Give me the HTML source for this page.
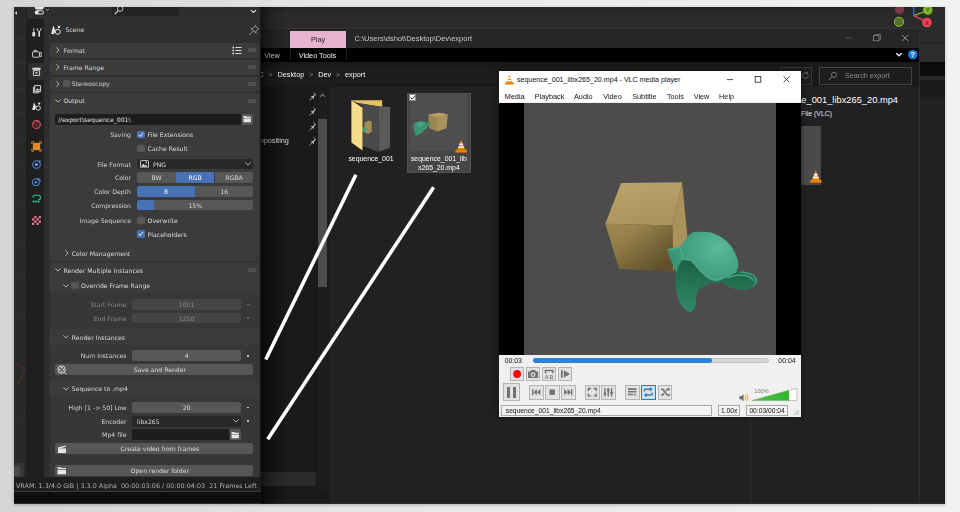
<!DOCTYPE html>
<html><head><meta charset="utf-8"><title>Render Multiple Instances</title>
<style>
html,body{margin:0;padding:0}
body{width:960px;height:512px;overflow:hidden;position:relative;background:linear-gradient(90deg,#d3d6d3 0,#e2e4e2 30%,#eceeec 70%,#f1f3f1 100%);font-family:"DejaVu Sans","Liberation Sans",sans-serif}
#shot{position:absolute;left:14px;top:7px;width:930.8px;height:496.6px;overflow:hidden;background:#2b2b2b;box-shadow:0 1px 3px rgba(0,0,0,.25)}
#in{position:absolute;left:-14px;top:-7px;width:960px;height:512px;filter:blur(0.35px)}
.a{position:absolute;box-sizing:border-box}
.t{position:absolute;white-space:pre;line-height:1}
/* blender */
.bt{font-family:"DejaVu Sans","Liberation Sans",sans-serif;font-size:6.15px;color:#dcdcdc;line-height:8px;height:8px}
.lbl{text-align:right;color:#d2d2d2}
.pan{background:#3b3b3b;border-radius:2.2px}
.w{background:#575757;border-radius:2px}
.cb{width:7.6px;height:7.6px;border-radius:1.4px;background:#585858}
.cb.on{background:#4772b3}
.ctr{text-align:center}
/* windows */
.wt{font-family:"Liberation Sans",sans-serif;color:#fff}
</style></head><body>
<div id="shot"><div id="in">
<!-- background: blender viewport + right strip -->
<div class="a" style="left:14px;top:7px;width:931px;height:22px;background:linear-gradient(#242524 0,#292a29 5px,#2a2b2a 100%)"></div>
<div class="a" style="left:919px;top:7px;width:26px;height:36px;background:#2b2b2b"></div>
<div class="a" style="left:919px;top:43px;width:26px;height:19px;background:#2d2d2d;border-top:1px solid #232323"></div>
<div class="a" style="left:919px;top:62px;width:26px;height:14px;background:#0b0b0b"></div>
<div class="a" style="left:919px;top:76px;width:26px;height:4px;background:#2a2a2a"></div>
<div class="a" style="left:919px;top:80px;width:26px;height:17px;background:#1b1b1b"></div>
<div class="a" style="left:919px;top:97px;width:26px;height:406px;background:#212022"></div>
<svg class="a" style="left:880px;top:7px" width="65" height="30" viewBox="880 7 65 30">
 <circle cx="899.4" cy="9.6" r="4.6" fill="#7a3b46"/>
 <line x1="913.8" y1="15.6" x2="913.8" y2="7" stroke="#3f7fe0" stroke-width="1"/>
 <line x1="913.8" y1="15.6" x2="927.5" y2="10.5" stroke="#7fb52a" stroke-width="1.2"/>
 <line x1="913.8" y1="15.6" x2="926.5" y2="22" stroke="#ee4057" stroke-width="1.2"/>
 <circle cx="899" cy="21.8" r="4.6" fill="#55702a" stroke="#8fc22c" stroke-width="1"/>
 <circle cx="927.8" cy="10" r="4.8" fill="#7fb52a"/>
 <circle cx="926.9" cy="22.5" r="4.8" fill="#ee4057"/>
 <text x="927.8" y="12" font-family="DejaVu Sans" font-size="5.5" text-anchor="middle" fill="#222">Y</text>
 <text x="926.9" y="24.5" font-family="DejaVu Sans" font-size="5.5" text-anchor="middle" fill="#222">X</text>
</svg>
<!--BG-->
<!--EXP_S--><!-- explorer window -->
<div class="a" style="left:240px;top:28px;width:680px;height:20px;background:#262626;border-top:1px solid #323232"></div>
<div class="a" style="left:240px;top:48px;width:680px;height:14px;background:#000"></div>
<div class="a" style="left:240px;top:62px;width:680px;height:24px;background:#191919"></div>
<div class="a" style="left:240px;top:86px;width:89px;height:417px;background:linear-gradient(90deg,#141415 0,#141415 24%,#1a1a1b 60%)"></div>
<div class="a" style="left:329px;top:86px;width:421px;height:417px;background:#212023"></div>
<div class="a" style="left:750px;top:86px;width:170px;height:417px;background:#212023;border-left:1px solid #2e2e30"></div>
<div class="a" style="left:919px;top:28px;width:1px;height:475px;background:#2f2f31"></div>
<!-- title bar -->
<div class="a" style="left:290px;top:30.8px;width:56.2px;height:17.2px;background:#e6b4d1"></div>
<div class="t wt" style="left:290px;top:36px;width:56.2px;text-align:center;font-size:7.3px;color:#231a21">Play</div>
<div class="t wt" style="left:354.5px;top:34.6px;font-size:7.5px;color:#c9c9c9">C:\Users\dshot\Desktop\Dev\export</div>
<svg class="a" style="left:840px;top:30px" width="75" height="16" viewBox="840 30 75 16" fill="none" stroke="#8a8a8a" stroke-width="0.8">
 <line x1="846" y1="38" x2="852" y2="38" stroke="#666"/>
 <rect x="873.4" y="35.6" width="5.6" height="5.2" stroke="#8a8a8a"/><path d="M875 35.6v-1.2h5.6v5.2h-1.6" stroke="#777"/>
 <path d="M902 34.8l6.4 6.4M908.4 34.8l-6.4 6.4" stroke="#b5b5b5"/>
</svg>
<!-- ribbon tabs -->
<div class="t wt" style="left:264.2px;top:52px;font-size:7.3px;color:#d8d8d8">View</div>
<div class="t wt" style="left:298.7px;top:52px;font-size:7.3px;color:#f0f0f0">Video Tools</div>
<div class="a" style="left:289.6px;top:48px;width:1px;height:12px;background:#1f1f1f"></div>
<div class="a" style="left:346px;top:48px;width:1px;height:12px;background:#1f1f1f"></div>
<svg class="a" style="left:892px;top:48px" width="28" height="14" viewBox="892 48 28 14">
 <path d="M896.2 53.2l2.8 2.6 2.8-2.6" fill="none" stroke="#f0f0f0" stroke-width="1.3"/>
 <circle cx="912.8" cy="54.6" r="4.7" fill="#1b7fe2"/>
 <text x="912.8" y="57.3" font-family="Liberation Sans" font-weight="bold" font-size="7.5" text-anchor="middle" fill="#fff">?</text>
</svg>
<!-- address bar -->
<div class="a" style="left:240px;top:66.5px;width:550px;height:18px;background:#1d1d1e"></div>
<div class="t wt" style="left:258.6px;top:71.3px;font-size:7.3px;color:#e8e8e8">C</div>
<div class="t wt" style="left:268.6px;top:71.6px;font-size:6.5px;color:#9a9a9a">&gt;</div>
<div class="t wt" style="left:277.5px;top:71.3px;font-size:7.3px;color:#f2f2f2">Desktop</div>
<div class="t wt" style="left:309.2px;top:71.6px;font-size:6.5px;color:#9a9a9a">&gt;</div>
<div class="t wt" style="left:318.3px;top:71.3px;font-size:7.3px;color:#f2f2f2">Dev</div>
<div class="t wt" style="left:336px;top:71.6px;font-size:6.5px;color:#9a9a9a">&gt;</div>
<div class="t wt" style="left:345px;top:71.3px;font-size:7.3px;color:#f2f2f2">export</div>
<div class="a" style="left:780px;top:66.5px;width:32px;height:18px;border:1px solid #3a3a3a;background:#1d1d1e"></div>
<svg class="a" style="left:800px;top:70px" width="11" height="11" viewBox="0 0 11 11"><path d="M8.3 5.5a2.9 2.9 0 1 1-1-2.2" fill="none" stroke="#777" stroke-width="0.8"/><path d="M7.6 1.6v2h-2" fill="none" stroke="#777" stroke-width="0.8"/></svg>
<div class="a" style="left:819px;top:66.5px;width:93px;height:18px;border:1px solid #444;background:#1d1d1e"></div>
<svg class="a" style="left:828px;top:70.5px" width="10" height="10" viewBox="0 0 10 10"><circle cx="6" cy="3.8" r="2.5" fill="none" stroke="#8c8c8c" stroke-width="0.8"/><path d="M4.2 5.6L1 8.8" stroke="#8c8c8c" stroke-width="0.9"/></svg>
<div class="t wt" style="left:845px;top:71.6px;font-size:7.2px;color:#8c8c8c">Search export</div>
<!-- nav pane -->
<div class="t wt" style="left:253.6px;top:137.4px;font-size:7.3px;color:#d8d8d8">ompositing</div>
<svg class="a" style="left:305px;top:89.200px" width="24" height="60" viewBox="305 90 24 60" fill="#c4c4c4">
 <g id="pin"><path d="M312.800 92.400l3.400 3.400-0.900 0.300-1.600 2.200 0.100 2-1.400-1.400-2.900 2.900-.4-.4 2.900-2.900-1.400-1.400 2 .1 2.200-1.600z"/></g>
 <use href="#pin" y="15"/><use href="#pin" y="30"/><use href="#pin" y="45"/>
</svg>
<div class="a" style="left:317.6px;top:90px;width:9.6px;height:400px;background:#1e1e1f"></div>
<div class="a" style="left:317.6px;top:119.3px;width:9.6px;height:167.7px;background:#4d4d4d"></div>
<svg class="a" style="left:318px;top:92px" width="9" height="7" viewBox="0 0 9 7"><path d="M2.200 4.600l2.300-2.300 2.300 2.300" fill="none" stroke="#c4c4c4" stroke-width="0.9"/></svg>
<div class="a" style="left:260px;top:472px;width:56px;height:13.5px;background:#2a2a2a"></div>
<!-- folder item -->
<svg class="a" style="left:348px;top:96px" width="48" height="58" viewBox="348 96 48 58">
 <path d="M351.400 100.300H382.200V107L357.600 103z" fill="#e6c25e"/>
 <path d="M357.600 103L379.200 106.400L378.300 151.700L362.500 146V106z" fill="#4a4a4b"/>
 <path d="M379 106.300L390.100 107V147.800L378.700 151.700z" fill="#59595a"/>
 <path d="M364.600 122.500l4-2 3.100 1v10.200l-3.600 2-3.500-1.200z" fill="#a38d53"/>
 <path d="M362.500 127.600c2-1 3.500 0 3.900 1.500c.3 1.600-.8 2.900-2.200 2.900h-1.700z" fill="#3f9a78"/>
 <path d="M351.400 100.300L362.500 107.700V150.400L351.400 142.500z" fill="#f6dd8b"/>
</svg>
<div class="t wt" style="left:340px;top:155.500px;width:62px;text-align:center;font-size:6.9px;color:#fff">sequence_001</div>
<!-- selected mp4 item -->
<div class="a" style="left:407px;top:93px;width:63.8px;height:79.6px;background:#464647;border:1px solid #525253"></div>
<div class="a" style="left:410.3px;top:95px;width:56.4px;height:56px;background:#4e4e4e"></div>
<svg class="a" style="left:410px;top:95px" width="57" height="58" viewBox="410 95 57 58">
 <path d="M428.4 114.800l11-2 8.200 1.800-1.200 13.600-9.400 3.200-8-3.400z" fill="#9c864d"/>
 <path d="M428.400 114.800l11-2 8.200 1.800-10.400 2.800z" fill="#b5a067"/>
 <path d="M437.200 117.400l10.400-2.800-1.200 13.600-9.400 3.200z" fill="#a8925a"/>
 <path d="M413.500 125c.5-2 3-3.500 5.500-3.300 2.500-1.200 5.500-.5 7 1.300l3.500-.8c1.500-.2 2.200.8 1.500 1.800l-3.500 2.200c-.3 2-1.800 3.600-3.800 4.200-.5 1.800-2 3-3.800 3.300-1.500 1.600-3.500 2.200-4.700 1.400-.8-.7-.6-2 .2-3-1.600-1.300-2.300-3.500-1.900-5z" fill="#3a9573"/>
 <path d="M417 122.500c2-1.200 5-.8 6.500.8.500 2-1 3.800-3 4.200-2 0-3.500-2-3.500-5z" fill="#4fb08d" opacity=".55"/>
 <!-- vlc cone -->
 <path d="M461.200 139.800l3.800 9.800h-7.600z" fill="#f48b0a"/>
 <path d="M459.800 143.400h2.800l0.600 1.600h-4zM458.800 146.200h4.800l0.600 1.600h-6z" fill="#fff"/>
 <path d="M456 149.600h10.400l0.800 2.800h-12z" fill="#f07c00"/>
</svg>
<div class="a" style="left:408.6px;top:94.2px;width:7.6px;height:7px;background:#fff;border:0.6px solid #888"></div>
<svg class="a" style="left:408.6px;top:94.2px" width="8" height="7" viewBox="0 0 8 7"><path d="M1.600 3.600l1.600 1.600 3.200-3.600" fill="none" stroke="#222" stroke-width="0.9"/></svg>
<div class="t wt" style="left:407px;top:155.500px;width:63.8px;text-align:center;font-size:6.900px;color:#fff">sequence_001_lib</div>
<div class="t wt" style="left:407px;top:164.500px;width:63.8px;text-align:center;font-size:6.900px;color:#fff">x265_20.mp4</div>
<!-- preview pane -->
<div class="t wt" style="left:698px;width:200px;text-align:right;top:96.300px;font-size:9.300px;color:#fff">sequence_001_libx265_20.mp4</div>
<div class="t wt" style="left:732px;width:100px;text-align:right;top:110.900px;font-size:6.900px;color:#e6e6e6">MP4 File (VLC)</div>
<div class="a" style="left:790px;top:126px;width:31.400px;height:59px;background:#4a4a4b"></div>
<svg class="a" style="left:806px;top:168px" width="18" height="18" viewBox="806 168 18 18">
 <path d="M815.800 170.200l3.800 9.800h-7.600z" fill="#f48b0a"/>
 <path d="M814.400 173.800h2.800l0.600 1.600h-4zM813.400 176.600h4.800l0.600 1.600h-6z" fill="#fff"/>
 <path d="M810.600 180h10.400l0.800 2.800h-12z" fill="#f07c00"/>
</svg>
<!--EXP_E-->
<!--BL_S--><div class="a" style="left:14px;top:7px;width:13.0px;height:484.5px;background:#282a28"></div>
<svg class="a" style="left:14px;top:7px" width="12" height="470" viewBox="14 7 12 470" fill="none" stroke="#343634" stroke-width="0.7"><path d="M14 38l12 1M14 62l12 1.500M14 88l12 2M14 112l12 2.500M14 138l12 3M14 166l12 3.500M14 200l12 4M14 241l12 4.600M14 274l12 6M14 313l12 7.600M14 420l12-6"/><path d="M14 363l11 6-8.500 17" stroke="#6a2b36"/><path d="M14.600 13l2.400-1.800v3.600z" fill="#d8d8d8" stroke="none"/></svg>
<div class="a" style="left:14px;top:462.8px;width:10.2px;height:14.6px;background:#383838;border-radius:0 2.500px 2.500px 0"></div>
<div class="a" style="left:14px;top:466px;width:6.0px;height:10.0px;background:#4a4a4a;border-radius:0 1.500px 1.500px 0"></div>
<div class="a" style="left:25.5px;top:7px;width:1.0px;height:12.0px;background:#1a1a1a"></div>
<div class="a" style="left:27px;top:7px;width:233.0px;height:12.0px;background:#2e2e2e"></div>
<div class="a" style="left:25.5px;top:18.6px;width:18.9px;height:458.6px;background:#1f1f1f;border-radius:3px 0 0 0"></div>
<div class="a" style="left:44.4px;top:18.6px;width:215.6px;height:458.6px;background:#2f2f2f"></div>
<div class="a" style="left:27.5px;top:63.3px;width:16.9px;height:16.5px;background:#2f2f2f;border-radius:2.500px 0 0 2.500px"></div>
<div class="a" style="left:260px;top:7px;width:1.0px;height:484.5px;background:#1c1c1c"></div>
<div class="a" style="left:261px;top:7px;width:24.0px;height:496.6px;background:linear-gradient(90deg,rgba(0,0,0,.55),rgba(0,0,0,.3) 25%,rgba(0,0,0,.12) 60%,rgba(0,0,0,0))"></div>
<svg class="a" style="left:33px;top:7px" width="18" height="10" viewBox="33 7 18 10"><rect x="34.8" y="5" width="9" height="4.400" rx="2.200" fill="#e6e6e6"/><rect x="34.8" y="10.200" width="9" height="4.400" rx="2.200" fill="#e6e6e6"/><rect x="38.5" y="11.200" width="4.400" height="2.400" rx="1.200" fill="#2e2e2e"/><path d="M45.900 9l1.500 1.500 1.500-1.500" fill="none" stroke="#ddd" stroke-width="0.7"/></svg>
<div class="a" style="left:112.2px;top:5px;width:66.8px;height:10.6px;background:#222322;border-radius:2px"></div>
<svg class="a" style="left:113px;top:5px" width="12" height="11" viewBox="0 0 12 11"><circle cx="7.200" cy="3.600" r="2.700" fill="none" stroke="#dcdcdc" stroke-width="0.9"/><path d="M5.200 5.600l-3.600 3.800" stroke="#dcdcdc" stroke-width="1.100"/></svg>
<svg class="a" style="left:249.500px;top:8.500px" width="7" height="5" viewBox="0 0 7 5"><path d="M1 1.200l2.500 2.400 2.500-2.400" fill="none" stroke="#eee" stroke-width="1.100"/></svg>
<svg class="a" style="left:31.0px;top:26.9px" width="11" height="11" viewBox="0 0 11 11"><path d="M2.800 1v4.500M1.800 5.500h2v3.500h-2z" fill="#e4e4e4" stroke="#e4e4e4" stroke-width="0.8"/><path d="M6.200 1.200c0 2 .6 2.800 1.700 3v5.200h.5v-5.200c1.100-.2 1.700-1 1.700-3" fill="none" stroke="#e4e4e4" stroke-width="1"/></svg>
<svg class="a" style="left:31.0px;top:48.3px" width="11" height="11" viewBox="0 0 11 11"><rect x="1.600" y="3.800" width="6.800" height="5.400" rx=".6" fill="none" stroke="#e4e4e4" stroke-width="0.9"/><path d="M3 3.800v-1.400h2.600v1.400M8.600 5.200l1.600-1v4.600l-1.600-1" fill="none" stroke="#e4e4e4" stroke-width="0.8"/></svg>
<svg class="a" style="left:31.0px;top:66.1px" width="11" height="11" viewBox="0 0 11 11"><path d="M1.400 1.800h8.200v2h-8.200z" fill="#e4e4e4"/><path d="M2.400 4.600h6.200v4.800h-6.200z" fill="none" stroke="#e4e4e4" stroke-width="0.9"/><path d="M4 6.200h3l-1.500 2z" fill="#e4e4e4"/></svg>
<svg class="a" style="left:31.0px;top:83.7px" width="11" height="11" viewBox="0 0 11 11"><path d="M3.600 1.600h6v6h-6z" fill="none" stroke="#e4e4e4" stroke-width="0.9"/><path d="M2.400 3v5.800h5.800" fill="none" stroke="#e4e4e4" stroke-width="0.9"/><path d="M4.400 6.600l1.600-2.400 1.400 1.400.8-.8.800 1.800z" fill="#e4e4e4"/></svg>
<svg class="a" style="left:31.0px;top:101.3px" width="11" height="11" viewBox="0 0 11 11"><path d="M3 1.200l2 4.600-1.200 3.200h-2.600z" fill="#e4e4e4"/><circle cx="7.200" cy="7" r="2.200" fill="none" stroke="#e4e4e4" stroke-width="0.9"/><circle cx="8.200" cy="2.600" r="1.100" fill="#e4e4e4"/></svg>
<svg class="a" style="left:31.0px;top:118.7px" width="11" height="11" viewBox="0 0 11 11"><circle cx="5.500" cy="5.500" r="3.900" fill="none" stroke="#d9505f" stroke-width="1.100"/><path d="M2.200 4.200c1.600-.4 2.600.3 2.900 1.500.3 1.300 1.400 1.500 1.600 3M4.800 1.800c.6 1.200 2 1.700 3.600 1.400M6.800 5.600c.8-.2 1.600.2 2 1" fill="none" stroke="#d9505f" stroke-width="0.9"/></svg>
<svg class="a" style="left:31.0px;top:140.9px" width="11" height="11" viewBox="0 0 11 11"><rect x="1.800" y="1.800" width="7.400" height="7.400" fill="#e08a2e"/><path d="M0.800 3v-2.200h2.200M8 0.800h2.200v2.200M10.200 8v2.200h-2.200M3 10.200h-2.200v-2.200" fill="none" stroke="#e8a050" stroke-width="0.8"/></svg>
<svg class="a" style="left:31.0px;top:158.5px" width="11" height="11" viewBox="0 0 11 11"><circle cx="5.500" cy="5.500" r="3.800" fill="none" stroke="#4f86e0" stroke-width="1.100"/><circle cx="5.500" cy="5.500" r="1.600" fill="#6aa0f0"/><circle cx="8.800" cy="2.400" r=".9" fill="#6aa0f0"/></svg>
<svg class="a" style="left:31.0px;top:176.1px" width="11" height="11" viewBox="0 0 11 11"><circle cx="4.800" cy="6.200" r="3.400" fill="none" stroke="#4f86e0" stroke-width="1.100"/><circle cx="4.800" cy="6.200" r="1.300" fill="#4f86e0"/><path d="M6.500 2.500a3.400 3.400 0 0 1 3 3" fill="none" stroke="#4f86e0" stroke-width="1.100"/></svg>
<svg class="a" style="left:31.0px;top:192.9px" width="11" height="11" viewBox="0 0 11 11"><path d="M2 4.500c0-1.500 1-2.300 2.300-2.300h3c1.300 0 2.200 1 2.200 2.200s-.9 2.200-2.200 2.200" fill="none" stroke="#2ec28a" stroke-width="1.100"/><path d="M1.500 8.600h7.500M2.800 7.200v2.600M5.200 7.200v2.600M7.600 7.200v2.600" stroke="#2ec28a" stroke-width="0.8" fill="none"/></svg>
<svg class="a" style="left:31.0px;top:215.1px" width="11" height="11" viewBox="0 0 11 11"><rect x="1" y="1" width="9" height="9" rx=".6" fill="#cf8090"/><path d="M1 1h2.250v2.250h-2.250zM5.500 1h2.250v2.250h-2.250zM3.250 3.250h2.250v2.250h-2.250zM7.750 3.250h2.250v2.250h-2.250zM1 5.500h2.250v2.250h-2.250zM5.500 5.500h2.250v2.250h-2.250zM3.250 7.750h2.250v2.250h-2.250zM7.750 7.750h2.250v2.250h-2.250z" fill="#2a0a12" opacity=".9"/></svg>
<svg class="a" style="left:50px;top:23.500px" width="12" height="12" viewBox="0 0 12 12"><path d="M3.200 1.400l2.200 5-1.300 3.500h-2.900z" fill="#e4e4e4"/><circle cx="7.800" cy="7.800" r="2.500" fill="none" stroke="#e4e4e4" stroke-width="1"/><circle cx="9" cy="2.900" r="1.200" fill="#e4e4e4"/></svg>
<div class="t bt" style="left:65.5px;top:25.8px;">Scene</div>
<svg class="a" style="left:247.500px;top:23.800px" width="12" height="12" viewBox="0 0 12 12"><path d="M7 1.400l3.600 3.600-1 .3-1.800 1.900.1 2-4.900-4.900 2 .1 1.900-1.900z" fill="none" stroke="#b4b4b4" stroke-width="0.8" stroke-linejoin="round"/><path d="M5.400 6.800L1.200 11" stroke="#b4b4b4" stroke-width="0.8"/></svg>
<div class="a" style="left:50px;top:43px;width:209.0px;height:15.0px;background:#3b3b3b;border-radius:2.200px"></div>
<svg class="a" style="left:55.4px;top:46.3px" width="6" height="8" viewBox="0 0 6 8"><path d="M1.4 1.2l2.6 2.8-2.600 2.800" fill="none" stroke="#cfcfcf" stroke-width="0.8"/></svg>
<svg class="a" style="left:247.6px;top:48.3px" width="8" height="4" viewBox="0 0 8 4" fill="#9a9a9a"><circle cx="1" cy="1" r=".55"/><circle cx="3" cy="1" r=".55"/><circle cx="5" cy="1" r=".55"/><circle cx="7" cy="1" r=".55"/><circle cx="1" cy="3" r=".55"/><circle cx="3" cy="3" r=".55"/><circle cx="5" cy="3" r=".55"/><circle cx="7" cy="3" r=".55"/></svg>
<div class="t bt" style="left:63.4px;top:46.8px;">Format</div>
<div class="a" style="left:50px;top:59.75px;width:209.0px;height:15.0px;background:#3b3b3b;border-radius:2.200px"></div>
<svg class="a" style="left:55.4px;top:63px" width="6" height="8" viewBox="0 0 6 8"><path d="M1.4 1.2l2.6 2.8-2.600 2.800" fill="none" stroke="#cfcfcf" stroke-width="0.8"/></svg>
<svg class="a" style="left:247.6px;top:65.0px" width="8" height="4" viewBox="0 0 8 4" fill="#9a9a9a"><circle cx="1" cy="1" r=".55"/><circle cx="3" cy="1" r=".55"/><circle cx="5" cy="1" r=".55"/><circle cx="7" cy="1" r=".55"/><circle cx="1" cy="3" r=".55"/><circle cx="3" cy="3" r=".55"/><circle cx="5" cy="3" r=".55"/><circle cx="7" cy="3" r=".55"/></svg>
<div class="t bt" style="left:63.4px;top:63.5px;">Frame Range</div>
<div class="a" style="left:50px;top:76.5px;width:209.0px;height:15.0px;background:#3b3b3b;border-radius:2.200px"></div>
<svg class="a" style="left:55.4px;top:79.7px" width="6" height="8" viewBox="0 0 6 8"><path d="M1.4 1.2l2.6 2.8-2.600 2.800" fill="none" stroke="#cfcfcf" stroke-width="0.8"/></svg>
<svg class="a" style="left:247.6px;top:81.7px" width="8" height="4" viewBox="0 0 8 4" fill="#9a9a9a"><circle cx="1" cy="1" r=".55"/><circle cx="3" cy="1" r=".55"/><circle cx="5" cy="1" r=".55"/><circle cx="7" cy="1" r=".55"/><circle cx="1" cy="3" r=".55"/><circle cx="3" cy="3" r=".55"/><circle cx="5" cy="3" r=".55"/><circle cx="7" cy="3" r=".55"/></svg>
<div class="a" style="left:62.8px;top:79.9px;width:7.6px;height:7.6px;border-radius:1.500px;background:#545454"></div>
<div class="t bt" style="left:71.8px;top:80.2px;color:#cfcfcf">Stereoscopy</div>
<svg class="a" style="left:232px;top:45.800px" width="10" height="9" viewBox="0 0 10 9" fill="#d8d8d8"><circle cx="1.200" cy="1.500" r=".9"/><circle cx="1.200" cy="4.500" r=".9"/><circle cx="1.200" cy="7.500" r=".9"/><rect x="3.400" y="1" width="6.200" height="1"/><rect x="3.400" y="4" width="6.200" height="1"/><rect x="3.400" y="7" width="6.200" height="1"/></svg>
<div class="a" style="left:50px;top:93.25px;width:209.0px;height:167.8px;background:#3b3b3b;border-radius:2.200px"></div>
<svg class="a" style="left:53.8px;top:97.5px" width="8" height="6" viewBox="0 0 8 6"><path d="M1.200 1.400l2.800 2.600 2.800-2.600" fill="none" stroke="#cfcfcf" stroke-width="0.8"/></svg>
<div class="t bt" style="left:63.4px;top:97.0px;">Output</div>
<svg class="a" style="left:247.6px;top:98.5px" width="8" height="4" viewBox="0 0 8 4" fill="#9a9a9a"><circle cx="1" cy="1" r=".55"/><circle cx="3" cy="1" r=".55"/><circle cx="5" cy="1" r=".55"/><circle cx="7" cy="1" r=".55"/><circle cx="1" cy="3" r=".55"/><circle cx="3" cy="3" r=".55"/><circle cx="5" cy="3" r=".55"/><circle cx="7" cy="3" r=".55"/></svg>
<div class="a" style="left:54.7px;top:114px;width:186.3px;height:11.0px;background:#1d1d1d;border-radius:2px 0 0 2px"></div>
<div class="t bt" style="left:58px;top:116.0px;color:#e0e0e0">//export\sequence_001\</div>
<div class="a" style="left:241.6px;top:114px;width:11.6px;height:11.0px;background:#575757;border-radius:0 2px 2px 0"></div>
<svg class="a" style="left:243.2px;top:115.3px" width="8.4" height="8.4" viewBox="0 0 10 10"><path d="M0.600 1.200h3.400l0.800 1h4.600v1.300h-8.800z" fill="#e2e2e2"/><path d="M0.600 4.200h8.800v4.400h-8.800z" fill="#e8e8e8"/></svg>
<div class="t bt lbl" style="left:41px;width:90px;top:131.2px;">Saving</div>
<div class="a" style="left:137.3px;top:130.89999999999998px;width:7.6px;height:7.6px;border-radius:1.500px;background:#4772b3"></div>
<svg class="a" style="left:137.3px;top:130.9px" width="7.6" height="7.6" viewBox="0 0 7.6 7.6"><path d="M1.700 3.900l1.500 1.600 2.800-3.400" fill="none" stroke="#fff" stroke-width="1"/></svg>
<div class="t bt" style="left:147.6px;top:131.2px;">File Extensions</div>
<div class="a" style="left:137.3px;top:144.5px;width:7.6px;height:7.6px;border-radius:1.500px;background:#575757"></div>
<div class="t bt" style="left:147.6px;top:144.8px;">Cache Result</div>
<div class="t bt lbl" style="left:41px;width:90px;top:160.5px;">File Format</div>
<div class="a" style="left:137.3px;top:158.6px;width:115.9px;height:10.8px;background:#282828;border-radius:2px"></div>
<svg class="a" style="left:139.600px;top:159.800px" width="9" height="8.400" viewBox="0 0 9 8.400"><rect x=".5" y=".5" width="8" height="7.400" rx=".8" fill="none" stroke="#e4e4e4" stroke-width="0.8"/><path d="M1.200 6.800l2-3 1.600 1.800 1-.8 1.800 2z" fill="#e4e4e4"/><circle cx="6.400" cy="2.400" r=".8" fill="#e4e4e4"/></svg>
<div class="t bt" style="left:153px;top:160.5px;">PNG</div>
<svg class="a" style="left:244.0px;top:161.2px" width="8" height="6" viewBox="0 0 8 6"><path d="M1.200 1.400l2.800 2.600 2.800-2.600" fill="none" stroke="#cfcfcf" stroke-width="0.8"/></svg>
<div class="t bt lbl" style="left:41px;width:90px;top:174.0px;">Color</div>
<div class="a" style="left:137.3px;top:172.1px;width:38.3px;height:10.8px;background:#575757;border-radius:2px 0 0 2px"></div>
<div class="t bt ctr" style="left:137.3px;width:38.3px;top:174.0px;">BW</div>
<div class="a" style="left:176.1px;top:172.1px;width:38.2px;height:10.8px;background:#4772b3"></div>
<div class="t bt ctr" style="left:176.1px;width:38.2px;top:174.0px;color:#fff">RGB</div>
<div class="a" style="left:214.8px;top:172.1px;width:38.4px;height:10.8px;background:#575757;border-radius:0 2px 2px 0"></div>
<div class="t bt ctr" style="left:214.8px;width:38.4px;top:174.0px;">RGBA</div>
<div class="t bt lbl" style="left:41px;width:90px;top:187.9px;">Color Depth</div>
<div class="a" style="left:137.3px;top:186px;width:57.5px;height:10.8px;background:#4772b3;border-radius:2px 0 0 2px"></div>
<div class="t bt ctr" style="left:137.3px;width:57.5px;top:187.9px;color:#fff">8</div>
<div class="a" style="left:195.3px;top:186px;width:57.9px;height:10.8px;background:#575757;border-radius:0 2px 2px 0"></div>
<div class="t bt ctr" style="left:195.3px;width:57.9px;top:187.9px;">16</div>
<div class="t bt lbl" style="left:41px;width:90px;top:201.5px;">Compression</div>
<div class="a" style="left:137.3px;top:199.6px;width:115.9px;height:10.8px;background:linear-gradient(90deg,#4772b3 0,#4772b3 14.500%,#575757 14.500%);border-radius:2px"></div>
<div class="t bt ctr" style="left:137.3px;width:115.9px;top:201.5px;">15%</div>
<div class="t bt lbl" style="left:41px;width:90px;top:216.8px;">Image Sequence</div>
<div class="a" style="left:137.3px;top:216.5px;width:7.6px;height:7.6px;border-radius:1.500px;background:#575757"></div>
<div class="t bt" style="left:147.6px;top:216.8px;">Overwrite</div>
<div class="a" style="left:137.3px;top:230.29999999999998px;width:7.6px;height:7.6px;border-radius:1.500px;background:#4772b3"></div>
<svg class="a" style="left:137.3px;top:230.3px" width="7.6" height="7.6" viewBox="0 0 7.6 7.6"><path d="M1.700 3.900l1.500 1.600 2.800-3.400" fill="none" stroke="#fff" stroke-width="1"/></svg>
<div class="t bt" style="left:147.6px;top:230.6px;">Placeholders</div>
<svg class="a" style="left:64px;top:249.4px" width="6" height="8" viewBox="0 0 6 8"><path d="M1.4 1.2l2.6 2.8-2.600 2.800" fill="none" stroke="#cfcfcf" stroke-width="0.8"/></svg>
<div class="t bt" style="left:71.8px;top:249.9px;">Color Management</div>
<div class="a" style="left:50px;top:262.3px;width:209.0px;height:214.9px;background:#3b3b3b;border-radius:2.200px 2.200px 0 0"></div>
<svg class="a" style="left:53.8px;top:267.2px" width="8" height="6" viewBox="0 0 8 6"><path d="M1.200 1.400l2.800 2.600 2.800-2.600" fill="none" stroke="#cfcfcf" stroke-width="0.8"/></svg>
<div class="t bt" style="left:63.4px;top:266.7px;">Render Multiple Instances</div>
<svg class="a" style="left:247.6px;top:268.2px" width="8" height="4" viewBox="0 0 8 4" fill="#9a9a9a"><circle cx="1" cy="1" r=".55"/><circle cx="3" cy="1" r=".55"/><circle cx="5" cy="1" r=".55"/><circle cx="7" cy="1" r=".55"/><circle cx="1" cy="3" r=".55"/><circle cx="3" cy="3" r=".55"/><circle cx="5" cy="3" r=".55"/><circle cx="7" cy="3" r=".55"/></svg>
<div class="a" style="left:50px;top:293px;width:209.0px;height:36.0px;background:#373737"></div>
<svg class="a" style="left:62.4px;top:282.6px" width="8" height="6" viewBox="0 0 8 6"><path d="M1.200 1.400l2.800 2.600 2.800-2.600" fill="none" stroke="#cfcfcf" stroke-width="0.8"/></svg>
<div class="a" style="left:71px;top:281.8px;width:7.6px;height:7.6px;border-radius:1.500px;background:#545454"></div>
<div class="t bt" style="left:81px;top:282.1px;">Override Frame Range</div>
<div class="t bt lbl" style="left:36.5px;width:90px;top:300.8px;color:#8a8a8a">Start Frame</div>
<div class="a" style="left:132.4px;top:298.9px;width:108.4px;height:10.8px;background:#454545;border-radius:2px"></div>
<div class="t bt ctr" style="left:132.4px;width:108.4px;top:300.8px;color:#8a8a8a">1001</div>
<div class="a" style="left:247.1px;top:303.5px;width:1.600px;height:1.600px;border-radius:1px;background:#777"></div>
<div class="t bt lbl" style="left:36.5px;width:90px;top:314.5px;color:#8a8a8a">End Frame</div>
<div class="a" style="left:132.4px;top:312.6px;width:108.4px;height:10.8px;background:#454545;border-radius:2px"></div>
<div class="t bt ctr" style="left:132.4px;width:108.4px;top:314.5px;color:#8a8a8a">1250</div>
<div class="a" style="left:247.1px;top:317.2px;width:1.600px;height:1.600px;border-radius:1px;background:#777"></div>
<div class="a" style="left:50px;top:345px;width:209.0px;height:36.0px;background:#373737"></div>
<svg class="a" style="left:62.4px;top:334.4px" width="8" height="6" viewBox="0 0 8 6"><path d="M1.200 1.400l2.800 2.600 2.800-2.600" fill="none" stroke="#cfcfcf" stroke-width="0.8"/></svg>
<div class="t bt" style="left:71.8px;top:333.9px;">Render Instances</div>
<div class="t bt lbl" style="left:36.5px;width:90px;top:352.3px;">Num Instances</div>
<div class="a" style="left:132.4px;top:350.4px;width:108.4px;height:10.8px;background:#575757;border-radius:2px"></div>
<div class="t bt ctr" style="left:132.4px;width:108.4px;top:352.3px;">4</div>
<div class="a" style="left:247.1px;top:355.0px;width:1.600px;height:1.600px;border-radius:1px;background:#e6e6e6"></div>
<div class="a" style="left:54.7px;top:364.1px;width:198.5px;height:10.8px;background:#575757;border-radius:2px"></div>
<div class="t bt ctr" style="left:66.5px;width:186.7px;top:366.0px;">Save and Render</div>
<svg class="a" style="left:56.500px;top:364.600px" width="10" height="10" viewBox="0 0 10 10"><circle cx="4.600" cy="4.600" r="3.700" fill="none" stroke="#e4e4e4" stroke-width="0.9"/><circle cx="4.600" cy="2.600" r=".9" fill="#e4e4e4"/><circle cx="2.600" cy="4.600" r=".9" fill="#e4e4e4"/><circle cx="6.600" cy="4.600" r=".9" fill="#e4e4e4"/><circle cx="4.600" cy="6.600" r=".9" fill="#e4e4e4"/><path d="M7.400 7.400l2 1.800" stroke="#e4e4e4" stroke-width="0.9"/></svg>
<div class="a" style="left:50px;top:396.5px;width:209.0px;height:80.7px;background:#373737"></div>
<svg class="a" style="left:62.4px;top:385.6px" width="8" height="6" viewBox="0 0 8 6"><path d="M1.200 1.400l2.800 2.600 2.800-2.600" fill="none" stroke="#cfcfcf" stroke-width="0.8"/></svg>
<div class="t bt" style="left:71.8px;top:385.1px;">Sequence to .mp4</div>
<div class="t bt lbl" style="left:36.5px;width:90px;top:404.1px;">High [1 -&gt; 50] Low</div>
<div class="a" style="left:132.4px;top:402.2px;width:108.4px;height:10.8px;background:#575757;border-radius:2px"></div>
<div class="t bt ctr" style="left:132.4px;width:108.4px;top:404.1px;">20</div>
<div class="a" style="left:247.1px;top:406.8px;width:1.600px;height:1.600px;border-radius:1px;background:#e6e6e6"></div>
<div class="t bt lbl" style="left:36.5px;width:90px;top:417.7px;">Encoder</div>
<div class="a" style="left:132.4px;top:415.8px;width:108.4px;height:10.8px;background:#282828;border-radius:2px"></div>
<div class="t bt" style="left:137px;top:417.7px;">libx265</div>
<svg class="a" style="left:231.9px;top:418.4px" width="8" height="6" viewBox="0 0 8 6"><path d="M1.200 1.400l2.800 2.600 2.800-2.600" fill="none" stroke="#cfcfcf" stroke-width="0.8"/></svg>
<div class="a" style="left:247.1px;top:420.4px;width:1.600px;height:1.600px;border-radius:1px;background:#e6e6e6"></div>
<div class="t bt lbl" style="left:36.5px;width:90px;top:431.2px;">Mp4 file</div>
<div class="a" style="left:132.4px;top:429.3px;width:96.6px;height:10.8px;background:#1d1d1d;border-radius:2px 0 0 2px"></div>
<div class="a" style="left:229.5px;top:429.3px;width:11.3px;height:10.8px;background:#575757;border-radius:0 2px 2px 0"></div>
<svg class="a" style="left:230.9px;top:430.5px" width="8.4" height="8.4" viewBox="0 0 10 10"><path d="M0.600 1.200h3.400l0.800 1h4.600v1.300h-8.800z" fill="#e2e2e2"/><path d="M0.600 4.200h8.800v4.400h-8.800z" fill="#e8e8e8"/></svg>
<div class="a" style="left:54.7px;top:443.1px;width:198.5px;height:10.8px;background:#575757;border-radius:2px"></div>
<div class="t bt ctr" style="left:66.5px;width:186.7px;top:445.0px;">Create video from frames</div>
<svg class="a" style="left:56.500px;top:443.600px" width="10" height="10" viewBox="0 0 10 10"><path d="M1 4.400h8v4.600h-8z" fill="#e4e4e4"/><path d="M0.800 3.600l7.800-2.200.4 1.300-7.800 2.200z" fill="#e4e4e4"/></svg>
<div class="a" style="left:54.7px;top:465.3px;width:198.5px;height:10.8px;background:#575757;border-radius:2px"></div>
<div class="t bt ctr" style="left:66.5px;width:186.7px;top:467.2px;">Open render folder</div>
<svg class="a" style="left:57px;top:466.1px" width="9.6" height="9.6" viewBox="0 0 10 10"><path d="M0.600 1.200h3.400l0.800 1h4.600v1.300h-8.800z" fill="#e2e2e2"/><path d="M0.600 4.200h8.800v4.400h-8.800z" fill="#e8e8e8"/></svg>
<div class="a" style="left:14px;top:477.2px;width:246.5px;height:14.4px;background:#1e1e1e;border-bottom:1px solid #3a3a3a"></div>
<div class="t bt" style="left:16px;top:481.8px;color:#adadad;font-size:6.400px">VRAM: 1.3/4.0 GiB | 3.3.0 Alpha  00:00:03:06 / 00:00:04:03  21 Frames Left</div>
<div class="a" style="left:14px;top:491.6px;width:246.5px;height:11.9px;background:#0e0e0f"></div><!--BL_E-->
<!--VLC_S--><!-- VLC window -->
<div class="a" style="left:499px;top:70.800px;width:302px;height:346px;background:#f0f0f0;box-shadow:0 0 6px rgba(0,0,0,.55)"></div>
<div class="a" style="left:499px;top:70.800px;width:302px;height:31.700px;background:#fff"></div>
<svg class="a" style="left:503px;top:73px" width="14" height="14" viewBox="503 73 14 14">
 <path d="M509.400 75l2.900 7.400h-5.800z" fill="#f48b0a"/>
 <path d="M508.400 77.600h2l0.500 1.300h-3zM507.500 79.900h3.800l0.500 1.300h-4.800z" fill="#fff"/>
 <path d="M505.600 82.200h7.600l0.800 2.300h-9.200z" fill="#f07c00"/>
</svg>
<div class="t" style="left:517px;top:77.200px;font-family:'Liberation Sans',sans-serif;font-size:7.100px;color:#111">sequence_001_libx265_20.mp4 - VLC media player</div>
<svg class="a" style="left:722px;top:72px" width="76" height="16" viewBox="722 72 76 16" fill="none" stroke="#222" stroke-width="0.8">
 <path d="M727 79.600h6"/><rect x="755.200" y="76.600" width="5.600" height="5.600"/><path d="M783.600 76.400l6 6M789.600 76.400l-6 6"/>
</svg>
<div class="t" style="left:504.600px;top:92.900px;font-family:'Liberation Sans',sans-serif;font-size:7.300px;color:#111;word-spacing:0">Media</div>
<div class="t" style="left:534.700px;top:92.900px;font-family:'Liberation Sans',sans-serif;font-size:7.300px;color:#111">Playback</div>
<div class="t" style="left:574px;top:92.900px;font-family:'Liberation Sans',sans-serif;font-size:7.300px;color:#111">Audio</div>
<div class="t" style="left:603.200px;top:92.900px;font-family:'Liberation Sans',sans-serif;font-size:7.300px;color:#111">Video</div>
<div class="t" style="left:632.200px;top:92.900px;font-family:'Liberation Sans',sans-serif;font-size:7.300px;color:#111">Subtitle</div>
<div class="t" style="left:666.900px;top:92.900px;font-family:'Liberation Sans',sans-serif;font-size:7.300px;color:#111">Tools</div>
<div class="t" style="left:693.700px;top:92.900px;font-family:'Liberation Sans',sans-serif;font-size:7.300px;color:#111">View</div>
<div class="t" style="left:719.100px;top:92.900px;font-family:'Liberation Sans',sans-serif;font-size:7.300px;color:#111">Help</div>
<!-- video -->
<div class="a" style="left:499px;top:102.500px;width:302px;height:252.200px;background:#000"></div>
<div class="a" style="left:524px;top:102.500px;width:252px;height:252.200px;background:#4c4c4c"></div>
<svg class="a" style="left:524px;top:102.500px" width="252" height="252.200" viewBox="524 102.500 252 252.200">
 <defs>
  <linearGradient id="ct" x1="0" y1="0" x2="0.300" y2="1"><stop offset="0" stop-color="#b9a46b"/><stop offset="1" stop-color="#ab955c"/></linearGradient>
  <linearGradient id="cf" x1="0" y1="0" x2="0.200" y2="1"><stop offset="0" stop-color="#9e8850"/><stop offset="1" stop-color="#86713d"/></linearGradient>
  <radialGradient id="mk" cx="0.560" cy="0.200" r="0.700"><stop offset="0" stop-color="#5cba9a"/><stop offset="0.400" stop-color="#46a584"/><stop offset="1" stop-color="#2f8a69"/></radialGradient>
 <linearGradient id="mkd" x1="0.500" y1="0" x2="0.300" y2="1"><stop offset="0" stop-color="#1b5c43"/><stop offset="0.450" stop-color="#247154"/><stop offset="1" stop-color="#2f8867"/></linearGradient>
  <linearGradient id="cfs" x1="0" y1="0" x2="1" y2="0.600"><stop offset="0.350" stop-color="#000" stop-opacity="0"/><stop offset="1" stop-color="#000" stop-opacity="0.280"/></linearGradient>
 </defs>
 <path d="M621.100 182.600L682.100 181.700L672.700 225.100L605.300 223.300z" fill="url(#ct)"/>
 <path d="M605.300 223.300L672.700 225.100L673.300 271.100L619 268.200z" fill="url(#cf)"/>
 <path d="M605.300 223.300L672.700 225.100L673.300 271.100L619 268.200z" fill="url(#cfs)"/>
 <path d="M682.100 181.700L687.400 236L673.300 271.100L672.700 225.100z" fill="#a9935a"/>
<!--MK_S--><path d="M668.2 249.3C669.0 247.7 672.8 248.1 674.7 247.5C676.5 247.0 677.8 247.5 679.5 246.2C681.3 244.8 683.1 241.8 685.0 239.5C686.9 237.3 688.5 234.3 690.9 232.9C693.2 231.5 695.8 231.5 699.1 231.3C702.4 231.2 706.9 231.1 710.8 232.1C714.7 233.2 718.9 235.0 722.5 237.6C726.1 240.1 729.9 243.9 732.3 247.4C734.7 250.8 736.2 255.0 737.2 258.1C738.2 261.2 738.4 263.7 738.4 265.9C738.3 268.1 735.6 270.3 736.6 271.2C737.6 272.1 741.8 270.8 744.4 271.2C747.0 271.6 750.1 272.1 752.2 273.3C754.3 274.6 756.6 276.7 757.1 278.6C757.6 280.5 756.9 283.2 755.3 284.9C753.8 286.5 750.8 287.7 747.9 288.4C745.1 289.0 741.4 289.2 738.2 288.8C734.9 288.3 731.1 286.9 728.4 285.7C725.7 284.4 724.2 281.9 722.1 281.4C720.1 280.8 718.5 282.3 716.3 282.5C714.1 282.8 711.2 282.3 708.8 282.9C706.5 283.6 704.0 285.1 702.0 286.4C700.1 287.7 698.1 288.8 697.1 290.7C696.1 292.7 696.5 295.6 696.1 298.2C695.8 300.7 696.0 303.9 695.2 306.0C694.4 308.1 692.9 310.4 691.3 310.9C689.6 311.3 687.3 310.4 685.4 308.9C683.5 307.4 681.4 304.8 679.9 302.1C678.5 299.3 677.5 295.6 676.8 292.3C676.1 289.0 675.7 285.7 675.6 282.5C675.6 279.3 676.7 275.9 676.4 273.1C676.1 270.4 674.8 268.6 673.7 265.9C672.6 263.2 670.7 259.9 669.8 257.1C668.9 254.4 667.4 250.9 668.2 249.3z" fill="url(#mk)"/>
 <path d="M676.4 273.1C677.1 270.1 678.3 266.3 679.5 264.0C680.8 261.6 681.9 259.7 683.8 259.1C685.8 258.5 688.7 258.8 691.3 260.4C693.8 262.1 696.1 266.3 699.1 269.2C702.0 272.1 705.9 276.0 708.8 277.8C711.8 279.6 713.7 280.2 716.7 280.0C719.6 279.7 723.2 277.7 726.4 276.3C729.6 274.9 732.8 272.2 735.8 271.6C738.8 271.0 741.7 272.2 744.4 272.8C747.1 273.3 750.5 274.0 752.2 275.1C753.9 276.2 754.4 278.0 754.6 279.6C754.8 281.2 754.5 283.0 753.4 284.5C752.3 285.9 750.5 287.7 747.9 288.4C745.4 289.1 741.4 289.2 738.2 288.8C734.9 288.3 731.1 286.9 728.4 285.7C725.7 284.4 724.2 281.9 722.1 281.4C720.1 280.8 718.5 282.3 716.3 282.5C714.1 282.8 711.2 282.3 708.8 282.9C706.5 283.6 704.0 285.1 702.0 286.4C700.1 287.7 698.1 288.8 697.1 290.7C696.1 292.7 696.5 295.6 696.1 298.2C695.8 300.7 696.0 303.9 695.2 306.0C694.4 308.1 692.9 310.4 691.3 310.9C689.6 311.3 687.3 310.4 685.4 308.9C683.5 307.4 681.4 304.8 679.9 302.1C678.5 299.3 677.5 295.6 676.8 292.3C676.1 289.0 675.7 285.7 675.6 282.5C675.6 279.3 675.8 276.2 676.4 273.1z" fill="url(#mkd)"/>
 <path d="M668.2 249.3C669.3 249.1 672.8 248.3 674.7 247.9C676.5 247.6 678.3 246.5 679.5 247.4C680.7 248.2 681.2 251.3 681.9 253.2C682.6 255.1 682.3 257.5 683.8 258.7C685.4 259.8 688.7 258.4 691.3 260.1C693.8 261.7 696.1 265.9 699.1 268.8C702.0 271.7 705.9 275.7 708.8 277.4C711.8 279.2 713.7 279.9 716.7 279.6C719.6 279.3 723.2 277.3 726.4 275.9C729.6 274.5 734.2 272.0 735.8 271.2" fill="none" stroke="#4cab8a" stroke-width="1.600" stroke-linecap="round"/>
 <path d="M727.4 277.1C729.2 276.7 734.7 274.9 738.2 274.7C741.6 274.5 745.4 274.9 747.9 275.7C750.5 276.5 752.5 278.9 753.4 279.6" fill="none" stroke="#3f9d7c" stroke-width="1.800" stroke-linecap="round"/><!--MK_E-->
</svg>
<!-- controls -->
<div class="t" style="left:504.700px;top:357.700px;font-family:'Liberation Sans',sans-serif;font-size:6.900px;color:#111">00:03</div>
<div class="t" style="left:778.300px;top:357.700px;font-family:'Liberation Sans',sans-serif;font-size:6.900px;color:#111">00:04</div>
<div class="a" style="left:532.800px;top:357.900px;width:236.400px;height:5.100px;border-radius:2.500px;background:#d6d6d6;border:0.500px solid #c2c2c2"></div>
<div class="a" style="left:532.800px;top:357.900px;width:179.200px;height:5.100px;border-radius:2.500px;background:#2a84d8"></div>
<!--VB_S--><div class="a" style="left:509.6px;top:367.2px;width:14.2px;height:14.1px;background:#e2e2e2;border:0.700px solid #b4b4b4"></div>
<svg class="a" style="left:509.6px;top:367.2px" width="14.2" height="14.1" viewBox="0 0 14 14"><circle cx="7" cy="7" r="3.900" fill="#f00"/></svg>
<div class="a" style="left:525.6px;top:367.2px;width:14.2px;height:14.1px;background:#e2e2e2;border:0.700px solid #b4b4b4"></div>
<svg class="a" style="left:525.6px;top:367.2px" width="14.2" height="14.1" viewBox="0 0 14 14"><path d="M2 4.400h2.200l.9-1.400h3.800l.9 1.400h2.200v6.600h-10z" fill="#727272"/><circle cx="7" cy="7.600" r="2.300" fill="#e2e2e2"/><circle cx="7" cy="7.600" r="1.200" fill="#727272"/></svg>
<div class="a" style="left:541.8px;top:367.2px;width:14.2px;height:14.1px;background:#e2e2e2;border:0.700px solid #b4b4b4"></div>
<svg class="a" style="left:541.8px;top:367.2px" width="14.2" height="14.1" viewBox="0 0 14 14"><path d="M3.400 6.200v-2.800h7.200v2.800" fill="none" stroke="#727272" stroke-width="1.500"/><text x="4.600" y="11.800" font-family="Liberation Sans" font-weight="bold" font-size="5.200" text-anchor="middle" fill="#727272">A</text><text x="9.400" y="11.800" font-family="Liberation Sans" font-weight="bold" font-size="5.200" text-anchor="middle" fill="#727272">B</text></svg>
<div class="a" style="left:558.0px;top:367.2px;width:14.4px;height:14.1px;background:#e2e2e2;border:0.700px solid #b4b4b4"></div>
<svg class="a" style="left:558.0px;top:367.2px" width="14.4" height="14.1" viewBox="0 0 14 14"><rect x="2.800" y="3.200" width="1.700" height="7.600" fill="#727272"/><path d="M5.600 3.200l6.200 3.800-6.200 3.800z" fill="#727272"/></svg>
<div class="a" style="left:502.500px;top:383.300px;width:17.800px;height:18px;background:#e2e2e2;border:0.700px solid #b4b4b4"></div>
<div class="a" style="left:507px;top:387px;width:3.200px;height:10.600px;background:#727272"></div><div class="a" style="left:512.600px;top:387px;width:3.200px;height:10.600px;background:#727272"></div>
<div class="a" style="left:529.2px;top:385.3px;width:14.5px;height:14.4px;background:#e2e2e2;border:0.700px solid #b4b4b4"></div>
<svg class="a" style="left:529.2px;top:385.3px" width="14.5" height="14.4" viewBox="0 0 14 14"><rect x="3" y="4" width="1.300" height="6" fill="#727272"/><path d="M7.600 4v6l-3.300-3zM11 4v6l-3.300-3z" fill="#727272"/></svg>
<div class="a" style="left:545.3px;top:385.3px;width:14.4px;height:14.4px;background:#e2e2e2;border:0.700px solid #b4b4b4"></div>
<svg class="a" style="left:545.3px;top:385.3px" width="14.4" height="14.4" viewBox="0 0 14 14"><rect x="4.400" y="4.400" width="5.200" height="5.200" fill="#727272"/></svg>
<div class="a" style="left:561.3px;top:385.3px;width:14.5px;height:14.4px;background:#e2e2e2;border:0.700px solid #b4b4b4"></div>
<svg class="a" style="left:561.3px;top:385.3px" width="14.5" height="14.4" viewBox="0 0 14 14"><rect x="9.700" y="4" width="1.300" height="6" fill="#727272"/><path d="M3 4v6l3.300-3zM6.400 4v6l3.300-3z" fill="#727272"/></svg>
<div class="a" style="left:585.0px;top:385.3px;width:14.6px;height:14.4px;background:#e2e2e2;border:0.700px solid #b4b4b4"></div>
<svg class="a" style="left:585.0px;top:385.3px" width="14.6" height="14.4" viewBox="0 0 14 14"><path d="M3.200 5.800v-2.400h2.600M8.200 3.400h2.600v2.400M10.800 8.200v2.400h-2.600M5.800 10.600h-2.600v-2.400" fill="none" stroke="#727272" stroke-width="1.400"/></svg>
<div class="a" style="left:601.3px;top:385.3px;width:14.5px;height:14.4px;background:#e2e2e2;border:0.700px solid #b4b4b4"></div>
<svg class="a" style="left:601.3px;top:385.3px" width="14.5" height="14.4" viewBox="0 0 14 14"><path d="M3.800 2.800v8.400M7 2.800v8.400M10.200 2.800v8.400" stroke="#727272" stroke-width="1.300"/><rect x="2.500" y="7.400" width="2.600" height="2" fill="#727272"/><rect x="5.700" y="4.200" width="2.600" height="2" fill="#727272"/><rect x="8.900" y="6.600" width="2.600" height="2" fill="#727272"/></svg>
<div class="a" style="left:625.0px;top:385.3px;width:14.5px;height:14.4px;background:#e2e2e2;border:0.700px solid #b4b4b4"></div>
<svg class="a" style="left:625.0px;top:385.3px" width="14.5" height="14.4" viewBox="0 0 14 14"><path d="M2.800 4h8.400M2.800 6.600h8.400M2.800 9.200h5.200" stroke="#727272" stroke-width="1.500"/><path d="M9.200 8l2 1.400-2 1.400z" fill="#727272"/></svg>
<div class="a" style="left:641.3px;top:385.3px;width:14.7px;height:14.4px;background:#cde4f7;border:0.800px solid #1a7fd8"></div>
<svg class="a" style="left:641.3px;top:385.3px" width="14.7" height="14.4" viewBox="0 0 14 14"><path d="M3.200 6.400v-1.200c0-.6.400-1 1-1h5.600M8.600 2.800l1.600 1.400-1.600 1.400M10.800 7.600v1.200c0 .6-.4 1-1 1h-5.600M5.400 11.200l-1.600-1.400 1.600-1.400" fill="none" stroke="#5a7690" stroke-width="1.400"/></svg>
<div class="a" style="left:657.5px;top:385.3px;width:14.3px;height:14.4px;background:#e2e2e2;border:0.700px solid #b4b4b4"></div>
<svg class="a" style="left:657.5px;top:385.3px" width="14.3" height="14.4" viewBox="0 0 14 14"><path d="M3 4.200h1.600l4.400 5.600h2M3 9.800h1.600l1.400-1.800M7.600 6l1.400-1.800h2" fill="none" stroke="#727272" stroke-width="1.400"/><path d="M10 2.600l2 1.600-2 1.600zM10 8.200l2 1.600-2 1.600z" fill="#727272"/></svg>
<svg class="a" style="left:738px;top:386px" width="62" height="17" viewBox="738 386 62 17"><defs><linearGradient id="vg" x1="0" x2="1"><stop offset="0" stop-color="#4fc247"/><stop offset="1" stop-color="#2fb52c"/></linearGradient></defs><path d="M739.400 396.200h1.800l2.400-2v7l-2.400-2h-1.800z" fill="#6a6a6a"/><path d="M744.800 395.200c1.200 1.200 1.200 3.800 0 5M746.400 394c2 2 2 5.600 0 7.400" fill="none" stroke="#f29a1c" stroke-width="0.900"/><path d="M752 400.500L796.800 388.200V400.500z" fill="#fff" stroke="#9a9a9a" stroke-width="0.600"/><path d="M752 400.500L789 390.350V400.500z" fill="url(#vg)"/><text x="761.500" y="392.900" font-family="Liberation Sans" font-size="5.600" text-anchor="middle" fill="#777">100%</text></svg><!--VB_E-->
<!-- status -->
<div class="a" style="left:500.500px;top:405.200px;width:211.200px;height:10.600px;border:0.700px solid #a8a8a8;background:#f4f4f4"></div>
<div class="t" style="left:505.800px;top:408.300px;font-family:'Liberation Sans',sans-serif;font-size:6.700px;color:#111">sequence_001_libx265_20.mp4</div>
<div class="a" style="left:718.300px;top:405.200px;width:21.700px;height:10.600px;border:0.700px solid #a8a8a8;background:#f4f4f4"></div>
<div class="t" style="left:718.300px;top:408.300px;width:21.700px;text-align:center;font-family:'Liberation Sans',sans-serif;font-size:6.700px;color:#111">1.00x</div>
<div class="a" style="left:745.800px;top:405.200px;width:42.500px;height:10.600px;border:0.700px solid #a8a8a8;background:#f4f4f4"></div>
<div class="t" style="left:745.800px;top:408.300px;width:42.500px;text-align:center;font-family:'Liberation Sans',sans-serif;font-size:6.700px;color:#111">00:03/00:04</div>
<svg class="a" style="left:792px;top:409px" width="8" height="7" viewBox="0 0 8 7" fill="#b0b0b0"><rect x="5.500" y="1" width="1" height="5"/><rect x="3.500" y="3" width="1" height="3"/><rect x="1.500" y="5" width="1" height="1"/></svg>
<!--VLC_E-->
<!--LN_S--><svg class="a" style="left:0;top:0;pointer-events:none" width="960" height="512" viewBox="0 0 960 512"><line x1="355.900" y1="174.700" x2="265.800" y2="359.500" stroke="#fff" stroke-width="3.600"/><line x1="433.600" y1="187.300" x2="267.700" y2="439.200" stroke="#fff" stroke-width="3.600"/></svg><!--LN_E-->
</div></div>
</body></html>
